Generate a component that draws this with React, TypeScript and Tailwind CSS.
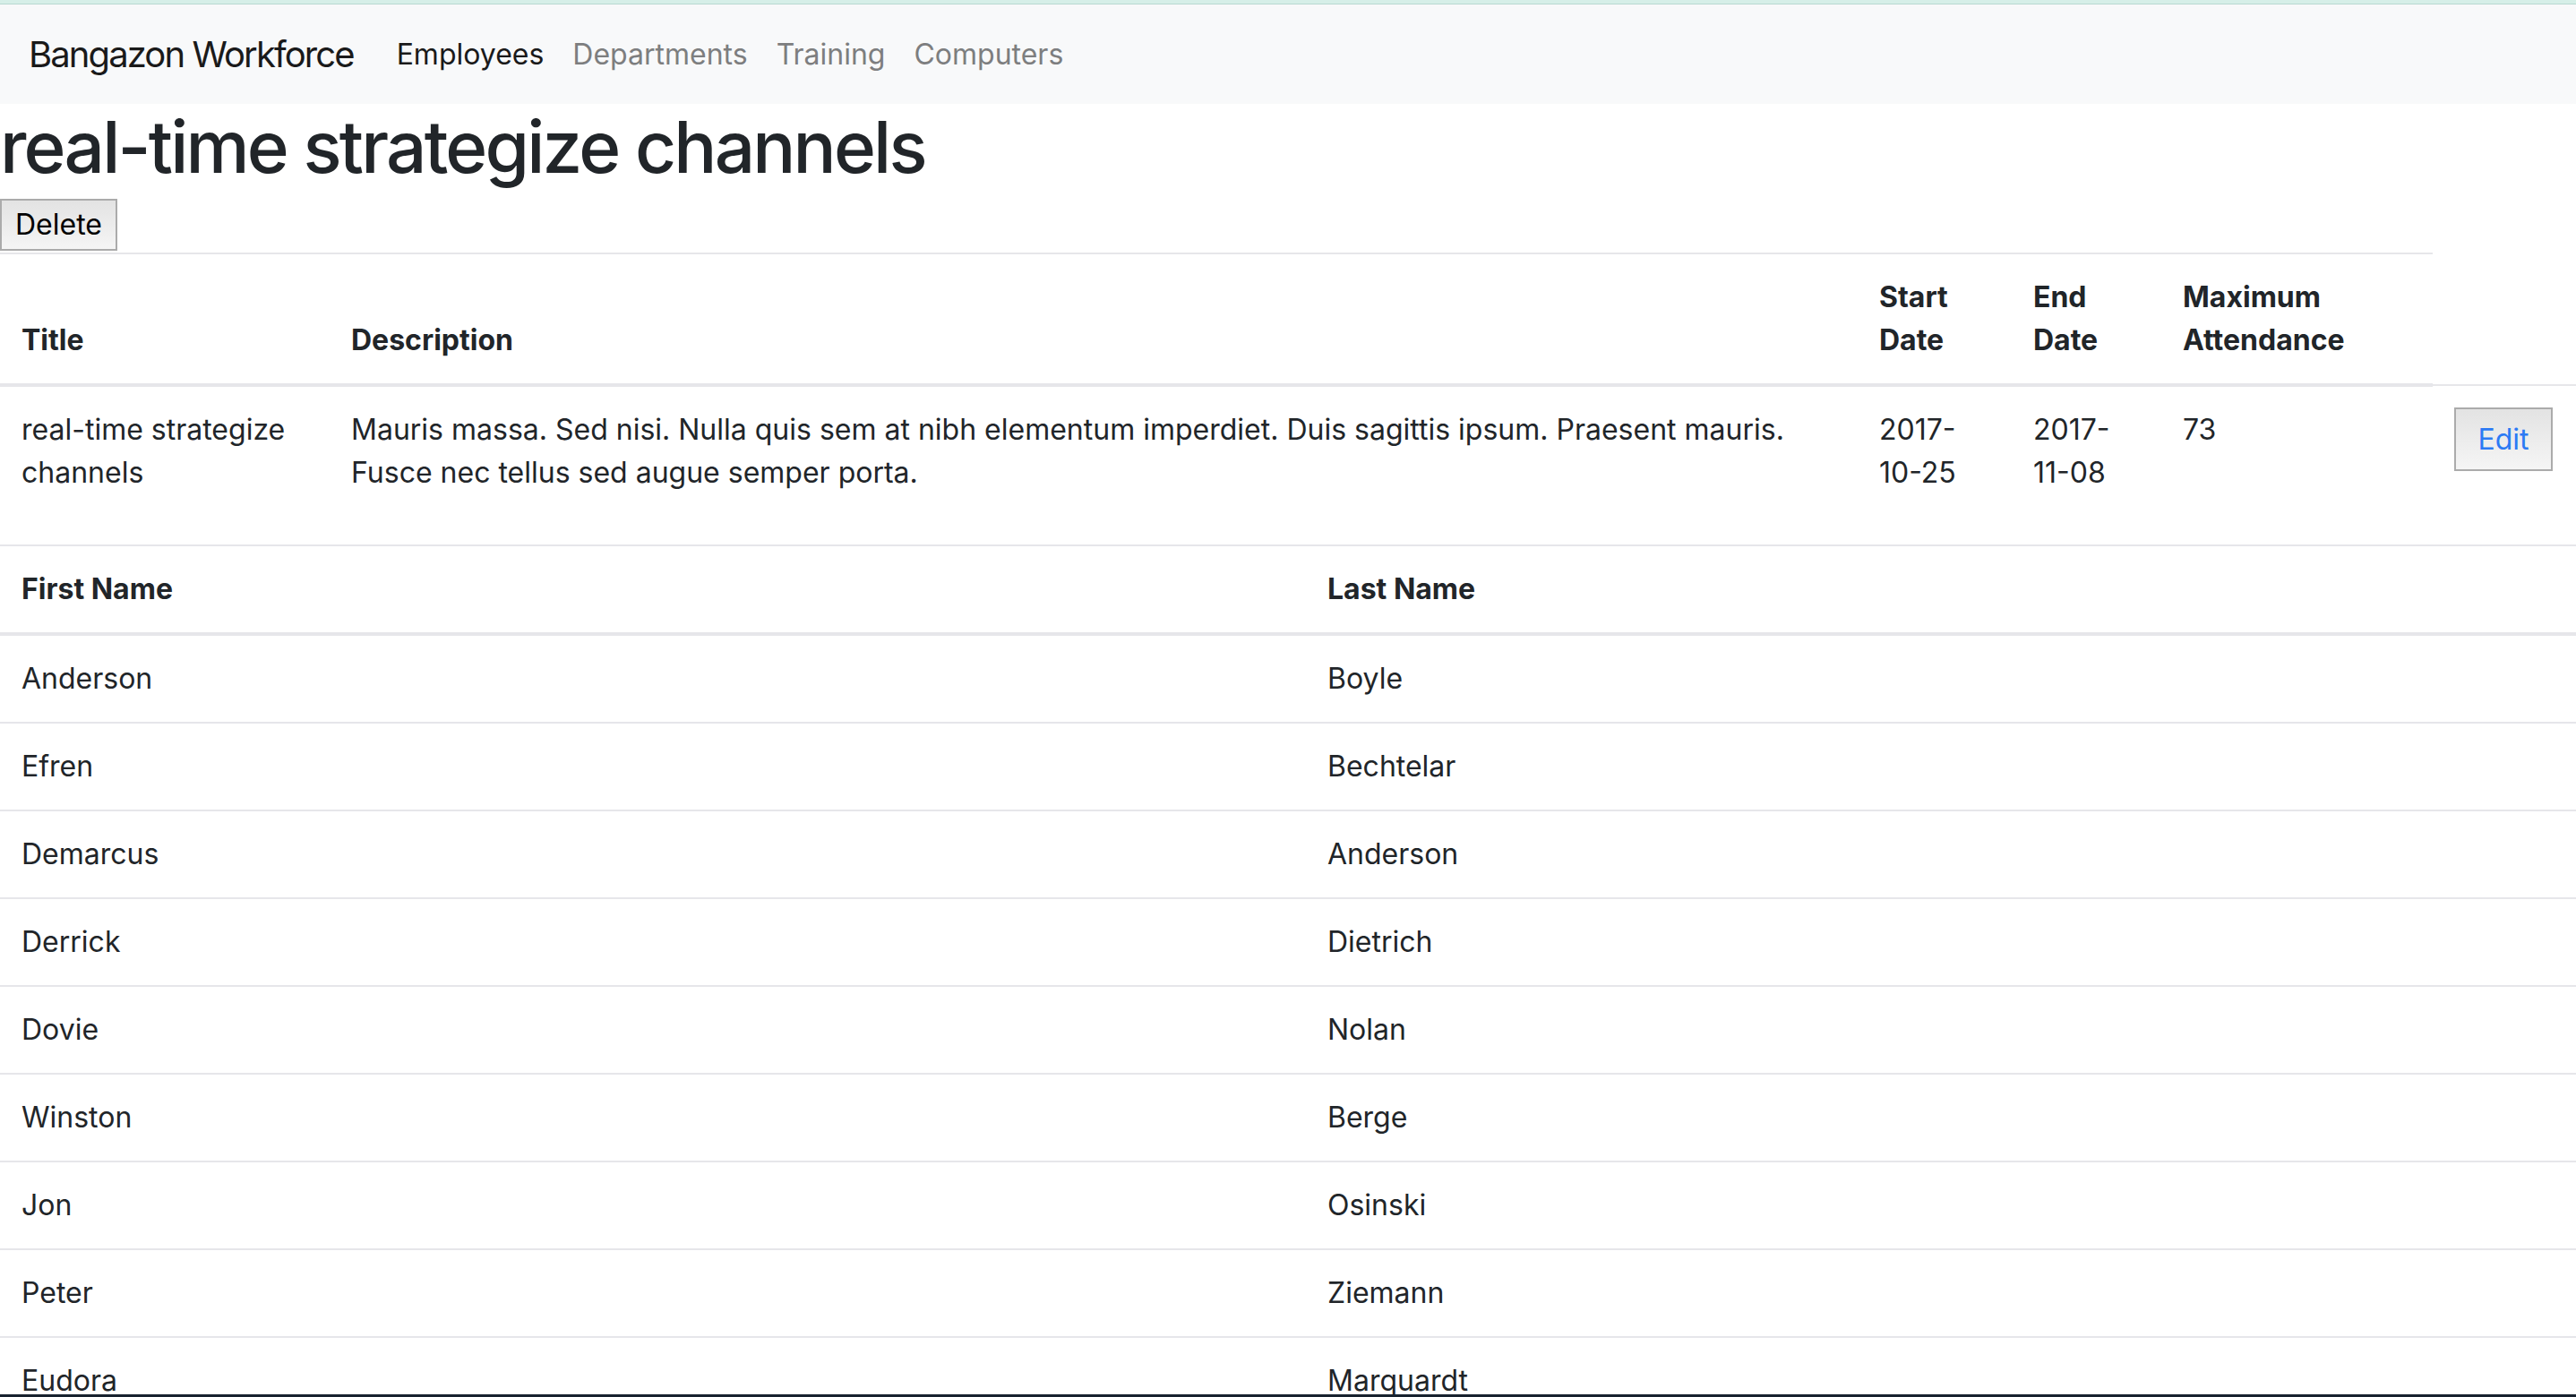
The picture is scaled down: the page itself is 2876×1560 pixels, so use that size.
const employees = [
  { first: "Anderson", last: "Boyle" },
  { first: "Efren", last: "Bechtelar" },
  { first: "Demarcus", last: "Anderson" },
  { first: "Derrick", last: "Dietrich" },
  { first: "Dovie", last: "Nolan" },
  { first: "Winston", last: "Berge" },
  { first: "Jon", last: "Osinski" },
  { first: "Peter", last: "Ziemann" },
  { first: "Eudora", last: "Marquardt" },
];

const th = "px-6 py-6 text-left align-bottom font-bold border-t-2 border-b-4 border-[#e6e6ea]";
const td = "px-6 py-6 align-top border-t-2 border-[#e6e6ea]";
const btn =
  "border-2 border-[#ababab] bg-gradient-to-b from-[#e3e3e3] to-[#f5f5f5] text-[32px] leading-[48px]";

const App = () => {
  return (
    <div className="min-h-screen bg-white text-[#212529] text-[32px] leading-[48px] font-['Inter',sans-serif]">
      <div className="h-[5px] bg-[#d6efe8] border-b border-[#b9d9d1]" />
      <nav className="flex items-center h-[111px] px-8 bg-[#f8f9fa]">
        <a className="text-[40px] leading-[60px] text-[#1a1a1a] mr-8 tracking-[-1.9px]">Bangazon Workforce</a>
        <ul className="flex">
          <li className="px-4 text-[#1a1a1a]">Employees</li>
          <li className="px-4 text-[#7d7e7f]">Departments</li>
          <li className="px-4 text-[#7d7e7f]">Training</li>
          <li className="px-4 text-[#7d7e7f]">Computers</li>
        </ul>
      </nav>

      <h1 className="text-[80px] leading-[96px] font-medium tracking-[-2.8px] mb-[10px]">real-time strategize channels</h1>
      <div className="flex">
        <button className={`${btn} h-[58px] px-[15px] text-black`}>Delete</button>
      </div>

      <table className="w-full table-fixed border-collapse mt-[2px] mb-8">
        <colgroup>
          <col className="w-[368px]" />
          <col className="w-[1706px]" />
          <col className="w-[172px]" />
          <col className="w-[167px]" />
          <col className="w-[303px]" />
          <col className="w-[160px]" />
        </colgroup>
        <thead>
          <tr>
            <th className={th}>Title</th>
            <th className={th}>Description</th>
            <th className={th}>Start Date</th>
            <th className={th}>End Date</th>
            <th className={th}>Maximum Attendance</th>
          </tr>
        </thead>
        <tbody>
          <tr>
            <td className={td}>real-time strategize channels</td>
            <td className={td}>
              Mauris massa. Sed nisi. Nulla quis sem at nibh elementum imperdiet. Duis sagittis ipsum. Praesent mauris.
              Fusce nec tellus sed augue semper porta.
            </td>
            <td className={td}>2017-10-25</td>
            <td className={td}>2017-11-08</td>
            <td className={td}>73</td>
            <td className={td}>
              <button className={`${btn} h-[71px] w-[110px] text-[#2c7af4]`}>Edit</button>
            </td>
          </tr>
        </tbody>
      </table>

      <table className="w-full table-fixed border-collapse">
        <colgroup>
          <col className="w-[1458px]" />
          <col />
        </colgroup>
        <thead>
          <tr>
            <th className={th}>First Name</th>
            <th className={th}>Last Name</th>
          </tr>
        </thead>
        <tbody>
          {employees.map((e) => (
            <tr key={e.first}>
              <td className={td}>{e.first}</td>
              <td className={td}>{e.last}</td>
            </tr>
          ))}
        </tbody>
      </table>

      <div className="fixed bottom-0 left-0 right-0 h-[3px] bg-[#18222f]" />
    </div>
  );
};

export default App;
